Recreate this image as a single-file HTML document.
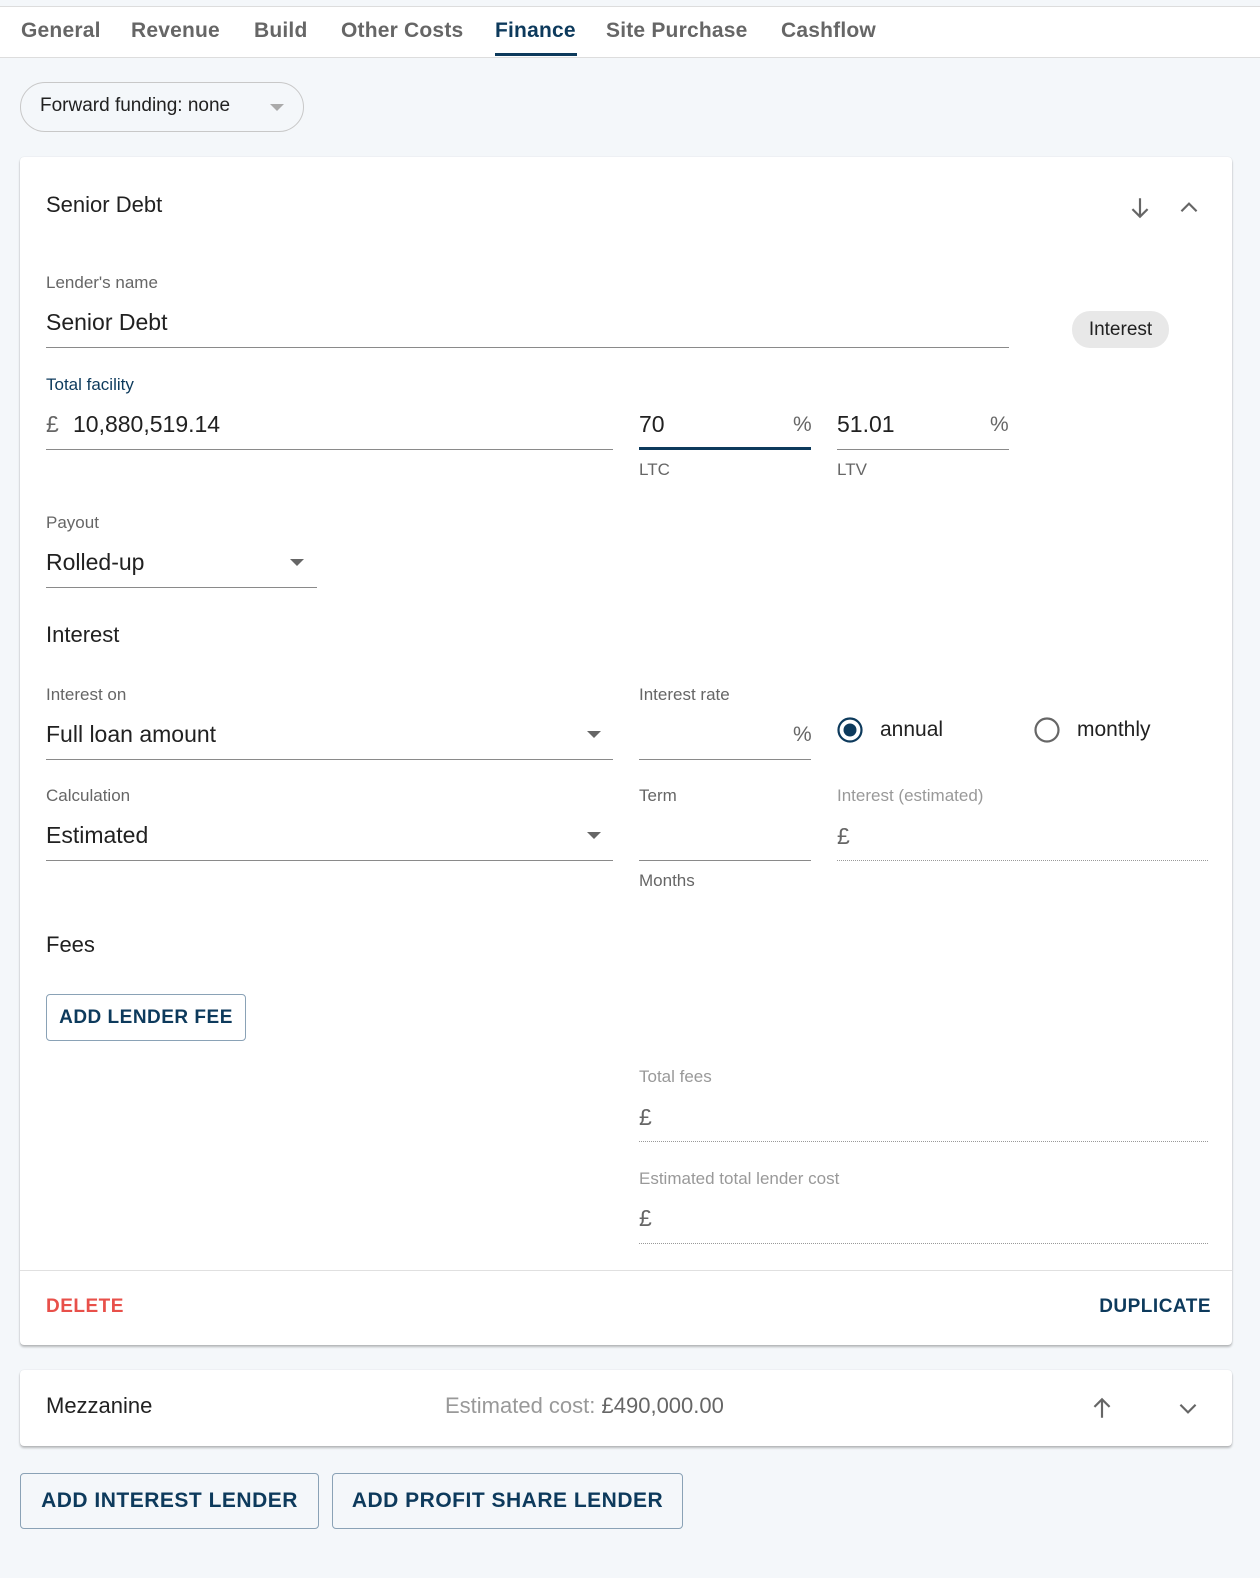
<!DOCTYPE html>
<html><head><meta charset="utf-8"><style>
*{margin:0;padding:0;box-sizing:border-box}
body{width:1260px;height:1578px;background:#f4f7fa;font-family:"Liberation Sans",Arial,sans-serif;position:relative;overflow:hidden;color:#212121}
.a{position:absolute}
.t{position:absolute;white-space:nowrap;line-height:30px;height:30px}
.lab{font-size:17px;color:#666}
.val{font-size:23px;color:#212121}
.ul{position:absolute;height:1px;background:#8a8a8a}
.dot{position:absolute;height:0;border-top:1px dotted #999}
.tab{font-size:21px;color:#666;font-weight:bold;letter-spacing:0.2px}
.tri{position:absolute;width:0;height:0;border-left:7px solid transparent;border-right:7px solid transparent;border-top:7px solid #666}
.card{position:absolute;background:#fff;border-radius:4px;box-shadow:0 2px 2px rgba(0,0,0,.25),0 0 1px rgba(0,0,0,.15)}
.btn{position:absolute;border:1px solid #8aa2b6;border-radius:4px;color:#0d3a5c;font-weight:bold;text-align:center;letter-spacing:.5px}
</style></head><body>
<div class="a" style="left:0;top:0;width:1260px;height:57px;background:#fff;border-top:1px solid #ddd;top:6px;height:52px;border-bottom:1px solid #ddd"></div>
<div class="t tab" style="left:21px;top:16px">General</div>
<div class="t tab" style="left:131px;top:16px">Revenue</div>
<div class="t tab" style="left:254px;top:16px">Build</div>
<div class="t tab" style="left:341px;top:16px">Other Costs</div>
<div class="t tab" style="left:495px;top:16px;color:#0d3a5c">Finance</div>
<div class="a" style="left:495px;top:53px;width:82px;height:3px;background:#0d3a5c"></div>
<div class="t tab" style="left:606px;top:16px">Site Purchase</div>
<div class="t tab" style="left:781px;top:16px">Cashflow</div>

<div class="a" style="left:20px;top:82px;width:284px;height:50px;border:1px solid #c8c8c8;border-radius:25px"></div>
<div class="t" style="left:40px;top:91px;font-size:19px">Forward funding: none</div>
<div class="tri" style="left:270px;top:104px;border-top-color:#aaa"></div>

<div class="card" style="left:20px;top:157px;width:1212px;height:1188px"></div>
<div class="t" style="left:46px;top:190px;font-size:22px">Senior Debt</div>
<svg class="a" style="left:1127px;top:195px" width="26" height="26" viewBox="0 0 24 24"><path d="M12 3v17M5 13l7 7 7-7" stroke="#666" stroke-width="2" fill="none"/></svg>
<svg class="a" style="left:1176px;top:195px" width="26" height="26" viewBox="0 0 24 24"><path d="M5 15l7-7 7 7" stroke="#666" stroke-width="2" fill="none"/></svg>

<div class="t lab" style="left:46px;top:268px">Lender's name</div>
<div class="t val" style="left:46px;top:307px">Senior Debt</div>
<div class="ul" style="left:46px;top:347px;width:963px"></div>
<div class="a" style="left:1072px;top:311px;width:97px;height:37px;background:#e8e8e8;border-radius:18px;font-size:19px;line-height:37px;text-align:center">Interest</div>

<div class="t lab" style="left:46px;top:370px;color:#0d3a5c">Total facility</div>
<div class="t val" style="left:46px;top:409px;color:#666">£</div>
<div class="t val" style="left:73px;top:409px">10,880,519.14</div>
<div class="ul" style="left:46px;top:449px;width:567px"></div>
<div class="t val" style="left:639px;top:409px">70</div>
<div class="t" style="left:793px;top:410px;font-size:21px;color:#666">%</div>
<div class="a" style="left:639px;top:447px;width:172px;height:3px;background:#0d3a5c"></div>
<div class="t val" style="left:837px;top:409px">51.01</div>
<div class="t" style="left:990px;top:410px;font-size:21px;color:#666">%</div>
<div class="ul" style="left:837px;top:449px;width:172px"></div>
<div class="t lab" style="left:639px;top:455px">LTC</div>
<div class="t lab" style="left:837px;top:455px">LTV</div>

<div class="t lab" style="left:46px;top:508px">Payout</div>
<div class="t val" style="left:46px;top:547px">Rolled-up</div>
<div class="tri" style="left:290px;top:559px"></div>
<div class="ul" style="left:46px;top:587px;width:271px"></div>

<div class="t" style="left:46px;top:620px;font-size:22px">Interest</div>

<div class="t lab" style="left:46px;top:680px">Interest on</div>
<div class="t val" style="left:46px;top:719px">Full loan amount</div>
<div class="tri" style="left:587px;top:731px"></div>
<div class="ul" style="left:46px;top:759px;width:567px"></div>
<div class="t lab" style="left:639px;top:680px">Interest rate</div>
<div class="t" style="left:793px;top:720px;font-size:21px;color:#666">%</div>
<div class="ul" style="left:639px;top:759px;width:172px"></div>
<svg class="a" style="left:836px;top:716px" width="28" height="28"><circle cx="14" cy="14" r="11.5" stroke="#0d3a5c" stroke-width="2.2" fill="none"/><circle cx="14" cy="14" r="6.5" fill="#0d3a5c"/></svg>
<div class="t" style="left:880px;top:715px;font-size:21px">annual</div>
<svg class="a" style="left:1033px;top:716px" width="28" height="28"><circle cx="14" cy="14" r="11.5" stroke="#666" stroke-width="2.2" fill="none"/></svg>
<div class="t" style="left:1077px;top:715px;font-size:21px">monthly</div>

<div class="t lab" style="left:46px;top:781px">Calculation</div>
<div class="t val" style="left:46px;top:820px">Estimated</div>
<div class="tri" style="left:587px;top:832px"></div>
<div class="ul" style="left:46px;top:860px;width:567px"></div>
<div class="t lab" style="left:639px;top:781px">Term</div>
<div class="ul" style="left:639px;top:860px;width:172px"></div>
<div class="t lab" style="left:639px;top:866px">Months</div>
<div class="t lab" style="left:837px;top:781px;color:#999">Interest (estimated)</div>
<div class="t val" style="left:837px;top:821px;color:#666">£</div>
<div class="dot" style="left:837px;top:860px;width:371px"></div>

<div class="t" style="left:46px;top:930px;font-size:22px">Fees</div>
<div class="btn" style="left:46px;top:994px;width:200px;height:47px;line-height:45px;font-size:19px">ADD LENDER FEE</div>

<div class="t lab" style="left:639px;top:1062px;color:#999">Total fees</div>
<div class="t val" style="left:639px;top:1102px;color:#666">£</div>
<div class="dot" style="left:639px;top:1141px;width:569px"></div>
<div class="t lab" style="left:639px;top:1164px;color:#999">Estimated total lender cost</div>
<div class="t val" style="left:639px;top:1203px;color:#666">£</div>
<div class="dot" style="left:639px;top:1243px;width:569px"></div>

<div class="a" style="left:20px;top:1270px;width:1212px;height:1px;background:#e0e0e0"></div>
<div class="t" style="left:46px;top:1292px;font-size:19px;font-weight:bold;color:#e8504a;letter-spacing:.5px">DELETE</div>
<div class="t" style="right:49px;top:1292px;font-size:19px;font-weight:bold;color:#0d3a5c;letter-spacing:.5px">DUPLICATE</div>

<div class="card" style="left:20px;top:1370px;width:1212px;height:76px"></div>
<div class="t" style="left:46px;top:1391px;font-size:22px">Mezzanine</div>
<div class="t" style="left:445px;top:1391px;font-size:22px;color:#999">Estimated cost: <span style="color:#666">£490,000.00</span></div>
<svg class="a" style="left:1089px;top:1395px" width="26" height="26" viewBox="0 0 24 24"><path d="M12 21V4M5 11l7-7 7 7" stroke="#666" stroke-width="2" fill="none"/></svg>
<svg class="a" style="left:1175px;top:1395px" width="26" height="26" viewBox="0 0 24 24"><path d="M5 9l7 7 7-7" stroke="#666" stroke-width="2" fill="none"/></svg>

<div class="btn" style="left:20px;top:1473px;width:299px;height:56px;line-height:54px;font-size:21px">ADD INTEREST LENDER</div>
<div class="btn" style="left:332px;top:1473px;width:351px;height:56px;line-height:54px;font-size:21px">ADD PROFIT SHARE LENDER</div>
</body></html>
